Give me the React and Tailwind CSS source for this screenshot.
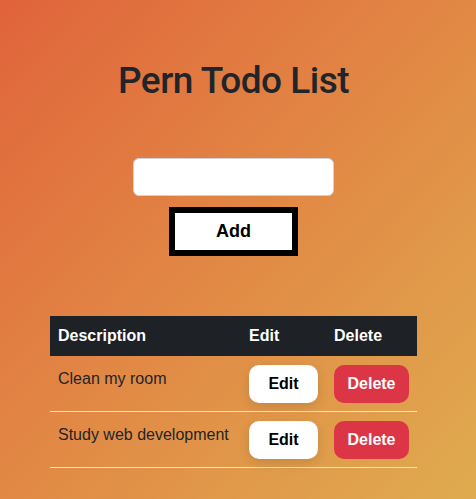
const TODOS = [
  { id: 1, description: 'Clean my room' },
  { id: 2, description: 'Study web development' },
];

export default function App() {
  return (
    <div
      className="min-h-[499px] w-full bg-linear-to-br from-[#e0633b] to-[#dfab4f] text-[#212529]"
      style={{ fontFamily: '"Liberation Sans", Arial, sans-serif' }}
    >
      <div className="w-[467px]">
        <div className="flex flex-col items-center pt-[57px]">
          <h1
            className="text-[37px] leading-[48px] font-medium tracking-[-0.5px]"
            style={{ fontFamily: 'Roboto, "Liberation Sans", sans-serif' }}
          >
            Pern Todo List
          </h1>

          <input
            type="text"
            className="mt-[53px] h-[38px] w-[201px] rounded-[6px] border border-[#ced4da] bg-white px-3"
          />
          <button className="mt-[11px] h-[49px] w-[129px] border-[6px] border-black bg-white text-[18px] font-bold text-black">
            Add
          </button>
        </div>

        {/* Todo table */}
        <table className="mx-auto mt-[60px] w-[367px] table-fixed border-collapse text-[16px]">
          <thead>
            <tr className="h-[40px] bg-[#1e2125] text-left text-white">
              <th className="w-[191px] px-2 font-bold">Description</th>
              <th className="w-[85px] px-2 font-bold">Edit</th>
              <th className="px-2 font-bold">Delete</th>
            </tr>
          </thead>
          <tbody>
            {TODOS.map((todo) => (
              <tr key={todo.id} className="border-b border-[#f1e4d3]">
                <td className="px-2 pt-[13px] pb-2 align-top leading-[20px]">{todo.description}</td>
                <td className="px-2 pt-[9px] pb-2 align-top">
                  <button className="h-[38px] w-[69px] rounded-[10px] bg-white font-bold text-black shadow-[0_4px_12px_rgba(0,0,0,0.12)]">
                    Edit
                  </button>
                </td>
                <td className="px-2 pt-[9px] pb-2 align-top">
                  <button className="h-[38px] w-[75px] rounded-[10px] bg-[#dc3545] font-bold text-white">
                    Delete
                  </button>
                </td>
              </tr>
            ))}
          </tbody>
        </table>
      </div>
    </div>
  );
}
